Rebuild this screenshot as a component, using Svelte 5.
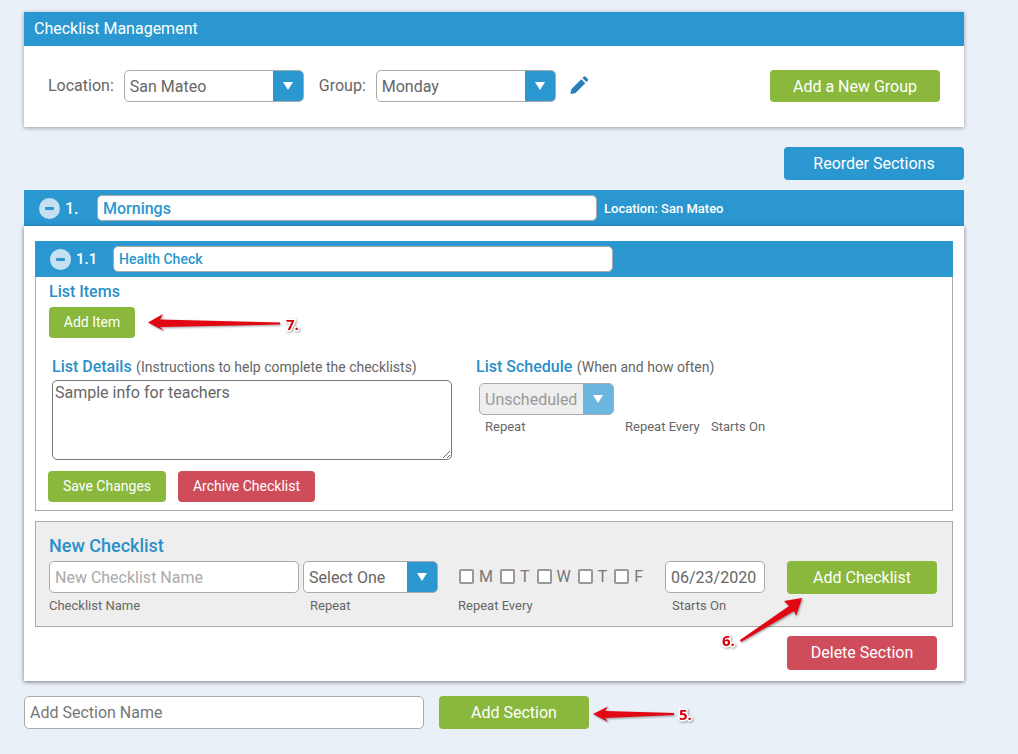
<script>
  const days = ['M', 'T', 'W', 'T', 'F'];
</script>

{#snippet dropdown(value, cls = '')}
  <div class="select {cls}">
    <span class="select-value">{value}</span>
    <span class="select-caret"><i></i></span>
  </div>
{/snippet}

{#snippet minus()}
  <span class="collapse"><i></i></span>
{/snippet}

<div class="page">
  <section class="card">
    <header class="card-title">Checklist Management</header>
    <div class="toolbar">
      <span class="tool-label">Location:</span>
      {@render dropdown('San Mateo', 'w180')}
      <span class="tool-label group-label">Group:</span>
      {@render dropdown('Monday', 'w180')}
      <svg class="pencil" viewBox="0 0 18 18" width="19" height="18">
        <path d="M0.800 13.200 L10.800 3.200 L14.800 7.200 L4.800 17.200 L0.300 17.900 Q-0.100 17.900 0 17.500 Z" />
        <path d="M11.900 2.100 L13.300 0.700 Q14.200 -0.100 15.100 0.700 L17.300 2.900 Q18.100 3.800 17.300 4.700 L15.900 6.100 Z" />
      </svg>
      <button class="btn green new-group">Add a New Group</button>
    </div>
  </section>

  <div class="reorder-row">
    <button class="btn blue reorder">Reorder Sections</button>
  </div>

  <section class="section">
    <div class="section-bar">
      {@render minus()}
      <span class="section-num">1.</span>
      <input class="name-input big" value="Mornings" />
      <span class="section-loc">Location: San Mateo</span>
    </div>

    <div class="section-body">
      <div class="list">
        <div class="list-bar">
          {@render minus()}
          <span class="list-num">1.1</span>
          <input class="name-input small" value="Health Check" />
        </div>
        <div class="list-body">
          <h4 class="list-heading">List Items</h4>
          <button class="btn green add-item">Add Item</button>

          <div class="details-row">
            <div class="details">
              <div class="sub-heading"><b>List Details</b> (Instructions to help complete the checklists)</div>
              <textarea class="details-text">Sample info for teachers</textarea>
            </div>
            <div class="schedule">
              <div class="sub-heading"><b>List Schedule</b> (When and how often)</div>
              {@render dropdown('Unscheduled', 'disabled')}
              <div class="schedule-labels">
                <span>Repeat</span>
                <span>Repeat Every</span>
                <span>Starts On</span>
              </div>
            </div>
          </div>

          <div class="list-actions">
            <button class="btn green save">Save Changes</button>
            <button class="btn red archive">Archive Checklist</button>
          </div>
        </div>
      </div>

      <div class="new-checklist">
        <h3>New Checklist</h3>
        <div class="new-row">
          <div class="field f-name">
            <input class="text-input" placeholder="New Checklist Name" />
            <label>Checklist Name</label>
          </div>
          <div class="field f-repeat">
            {@render dropdown('Select One', 'w135')}
            <label>Repeat</label>
          </div>
          <div class="field f-days">
            <div class="days">
              {#each days as d}
                <span class="day"><i></i>{d}</span>
              {/each}
            </div>
            <label>Repeat Every</label>
          </div>
          <div class="field f-date">
            <input class="text-input date" value="06/23/2020" />
            <label>Starts On</label>
          </div>
          <button class="btn green add-checklist">Add Checklist</button>
        </div>
      </div>

      <div class="section-actions">
        <button class="btn red delete">Delete Section</button>
      </div>
    </div>
  </section>

  <div class="add-section">
    <input class="text-input section-name" placeholder="Add Section Name" />
    <button class="btn green add-section-btn">Add Section</button>
  </div>

  <!-- annotations drawn on top of the screenshot -->
  <svg class="notes" width="1018" height="754" viewBox="0 0 1018 754">
    <path class="arrow" d="M148 322.500 L163 314 L160 319.500 L280 322.500 L280 324.500 L160 327 L164 331 Z" />
    <path class="arrow" d="M593 714 L608 706.500 L605 711 L674 713 L674 715 L605 718 L608 722 Z" />
    <path class="arrow" d="M802 598 L784 601 L789 606 L740 640 L741 642 L794 611 L796 616 Z" />
    <text x="286" y="330">7.</text>
    <text x="722" y="646">6.</text>
    <text x="679" y="720">5.</text>
  </svg>
</div>

<style>
  :global(body) {
    background: #e9f0f8;
    font-family: Roboto, "Liberation Sans", sans-serif;
    color: #666;
  }

  .page {
    position: relative;
    width: 1018px;
    height: 754px;
    box-sizing: border-box;
    padding: 12px 54px 0 24px;
    overflow: hidden;
  }

  .card {
    background: #fff;
    box-shadow: 0 1px 4px rgba(0, 0, 0, 0.35);
  }

  .card-title {
    height: 34px;
    line-height: 34px;
    padding-left: 10px;
    background: #2a97d0;
    color: #fff;
    font-size: 16px;
  }

  .toolbar {
    display: flex;
    align-items: center;
    height: 81px;
    padding: 0 24px 1px;
    box-sizing: border-box;
  }

  .tool-label {
    font-size: 16px;
    margin: 0 10px 2px 0;
  }

  .group-label {
    margin-left: 15px;
  }

  .select {
    display: flex;
    height: 32px;
    box-sizing: border-box;
    border: 1px solid #aaa;
    border-radius: 5px;
    background: #fff;
    overflow: hidden;
    font-size: 16px;
  }

  .w180 { width: 180px; }
  .w135 { width: 135px; }

  .select-value {
    flex: 1;
    padding-left: 5px;
    line-height: 32px;
  }

  .select-caret {
    width: 30px;
    background: #2a97d0;
    display: flex;
    align-items: center;
    justify-content: center;
  }

  .select-caret i {
    width: 0;
    height: 0;
    border-left: 5px solid transparent;
    border-right: 5px solid transparent;
    border-top: 8px solid #fff;
  }

  .select.disabled {
    width: 135px;
    background: #eee;
    color: #999;
    margin-left: 3px;
    margin-top: 7px;
  }

  .select.disabled .select-caret {
    background: #6bb6de;
  }

  .pencil {
    margin: 0 0 2px 14px;
    fill: #2a7fba;
  }

  .btn {
    border: none;
    border-radius: 4px;
    color: #fff;
    font-family: inherit;
    font-size: 16px;
    padding: 0;
  }

  .green { background: #89b83d; }
  .blue { background: #2a97d0; }
  .red { background: #cf4c5b; }

  .new-group {
    width: 170px;
    height: 32px;
    margin-left: auto;
  }

  .reorder-row {
    display: flex;
    justify-content: flex-end;
    margin-top: 20px;
  }

  .reorder {
    width: 180px;
    height: 33px;
  }

  .section {
    margin-top: 10px;
  }

  .section-bar,
  .list-bar {
    display: flex;
    align-items: center;
    background: #2a97d0;
    color: #fff;
    height: 36px;
    box-sizing: border-box;
    padding-left: 15px;
  }

  .collapse {
    width: 21px;
    height: 21px;
    border-radius: 50%;
    background: #c5e1f1;
    display: flex;
    align-items: center;
    justify-content: center;
    flex: none;
  }

  .collapse i {
    width: 9px;
    height: 3px;
    border-radius: 1px;
    background: #2a97d0;
  }

  .section-num {
    width: 32px;
    margin-left: 5px;
    font-size: 16px;
    font-weight: 500;
  }

  .list-num {
    width: 37px;
    margin-left: 5px;
    font-size: 15px;
    font-weight: 500;
  }

  .name-input {
    box-sizing: border-box;
    width: 500px;
    height: 26px;
    border: 1px solid #aaa;
    border-radius: 5px;
    padding: 0 5px;
    color: #2a97d0;
    font-family: inherit;
    font-weight: 500;
    outline: none;
  }

  .name-input.big { font-size: 16px; }
  .name-input.small { font-size: 14px; }

  .section-loc {
    margin-left: 7px;
    font-size: 13px;
    font-weight: 500;
  }

  .section-body {
    background: #fff;
    box-shadow: 0 1px 4px rgba(0, 0, 0, 0.5);
    padding: 15px 11px 0;
    height: 455px;
    box-sizing: border-box;
  }

  .list {
    height: 270px;
    box-sizing: border-box;
    border: 1px solid #aaa;
    border-top: none;
  }

  .list-bar {
    margin: 0 -1px;
  }

  .list-body {
    padding: 5px 13px 0 13px;
  }

  .list-heading {
    margin: 0;
    color: #2a8fc9;
    font-size: 16px;
    font-weight: 500;
    line-height: 20px;
  }

  .add-item {
    display: block;
    width: 86px;
    height: 31px;
    margin-top: 5px;
    padding-bottom: 2px;
    font-size: 14px;
  }

  .details-row {
    display: flex;
    margin-top: 20px;
    margin-left: 3px;
  }

  .details {
    width: 424px;
  }

  .sub-heading {
    font-size: 14px;
    line-height: 18px;
  }

  .sub-heading b {
    color: #2a8fc9;
    font-size: 16px;
    font-weight: 500;
    margin-right: 1px;
  }

  .details-text {
    display: block;
    box-sizing: border-box;
    width: 400px;
    height: 80px;
    margin-top: 4px;
    padding: 2px 2px;
    border: 1px solid #777;
    border-radius: 5px;
    color: #666;
    font-family: inherit;
    font-size: 16px;
    outline: none;
  }

  .schedule-labels {
    display: flex;
    margin: 4px 0 0 9px;
    font-size: 13px;
    line-height: 16px;
  }

  .schedule-labels span:nth-child(1) { width: 140px; }
  .schedule-labels span:nth-child(2) { width: 86px; }

  .list-actions {
    display: flex;
    gap: 12px;
    margin-top: 11px;
    margin-left: -1px;
  }

  .save,
  .archive {
    height: 31px;
    padding-bottom: 2px;
    font-size: 14px;
  }

  .save { width: 118px; }
  .archive { width: 137px; }

  .new-checklist {
    height: 106px;
    box-sizing: border-box;
    margin-top: 10px;
    padding: 13px 13px 0;
    background: #eee;
    border: 1px solid #aaa;
  }

  .new-checklist h3 {
    margin: 0;
    color: #2a8fc9;
    font-size: 18px;
    font-weight: 500;
    line-height: 22px;
  }

  .new-row {
    display: flex;
    align-items: flex-start;
    margin-top: 4px;
  }

  .field {
    display: flex;
    flex-direction: column;
  }

  .field label {
    margin-top: 4px;
    font-size: 13px;
    line-height: 17px;
  }

  .f-name { width: 254px; }
  .f-repeat { width: 155px; }
  .f-repeat label { padding-left: 7px; }
  .f-days { width: 207px; }
  .f-date { width: 122px; }
  .f-date label { padding-left: 7px; }

  .text-input {
    box-sizing: border-box;
    height: 32px;
    border: 1px solid #aaa;
    border-radius: 5px;
    background: #fff;
    padding: 0 5px;
    color: #666;
    font-family: inherit;
    font-size: 16px;
    outline: none;
  }

  .text-input::placeholder {
    color: #aaa;
    opacity: 1;
  }

  .f-name .text-input { width: 250px; }
  .date { width: 100px; }

  .days {
    display: flex;
    align-items: center;
    height: 30px;
    gap: 7px;
    margin: 0 0 2px 1px;
  }

  .day {
    display: flex;
    align-items: center;
    gap: 5px;
    font-size: 16px;
    color: #777;
  }

  .day i {
    width: 15px;
    height: 15px;
    box-sizing: border-box;
    border: 2px solid #999;
    border-radius: 2px;
    background: #fff;
  }

  .add-checklist {
    width: 150px;
    height: 33px;
  }

  .section-actions {
    display: flex;
    justify-content: flex-end;
    margin-top: 9px;
    padding-right: 16px;
  }

  .delete {
    width: 150px;
    height: 34px;
    padding-bottom: 2px;
  }

  .add-section {
    display: flex;
    gap: 15px;
    margin-top: 15px;
  }

  .section-name {
    width: 400px;
    height: 33px;
  }

  .section-name::placeholder {
    color: #777;
  }

  .add-section-btn {
    width: 150px;
    height: 33px;
  }

  .notes {
    position: absolute;
    left: 0;
    top: 0;
    pointer-events: none;
  }

  .arrow {
    fill: #e30613;
    filter: drop-shadow(1px 1px 1px rgba(0, 0, 0, 0.4));
  }

  .notes text {
    fill: #d8000c;
    stroke: #fff;
    stroke-width: 3px;
    paint-order: stroke;
    font-family: "Open Sans", sans-serif;
    font-size: 15px;
    font-weight: 700;
    filter: drop-shadow(1px 1px 1px rgba(0, 0, 0, 0.35));
  }
</style>
